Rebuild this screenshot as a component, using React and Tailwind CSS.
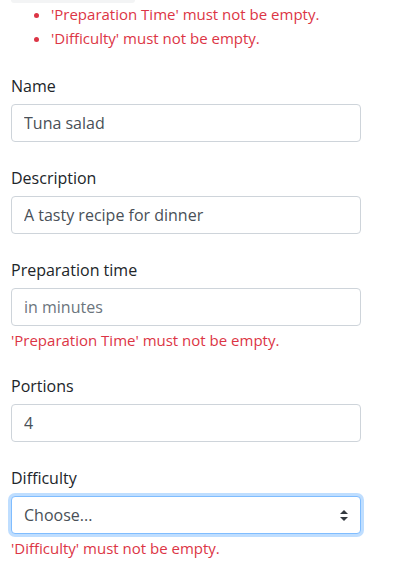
import React from 'react';

function Field({ label, value, placeholder, error }) {
  return (
    <div className="mb-6">
      <label className="block text-[16px] leading-6 text-[#212529] mb-[6px]">{label}</label>
      <input
        readOnly
        defaultValue={value}
        placeholder={placeholder}
        className="block w-[350px] h-[38px] px-3 text-[16px] text-[#495057] placeholder:text-[#6c757d] bg-white border border-[#ced4da] rounded outline-none"
      />
      {error && <div className="mt-1 text-[15px] leading-[20px] text-[#dc3545]">{error}</div>}
    </div>
  );
}

export default function App() {
  return (
    <div className="w-[406px] h-[567px] overflow-hidden bg-white font-['Segoe_UI','Open_Sans',sans-serif]">
      <div className="px-[11px]">
        <div className="w-[124px] h-[3px] bg-[#f3f4f5] rounded-b" />
        <ul className="list-disc pl-10 mt-[-1px] text-[15px] leading-6 text-[#dc3545] marker:text-[#dc3545]">
          <li>'Preparation Time' must not be empty.</li>
          <li>'Difficulty' must not be empty.</li>
        </ul>
        <div className="mt-[24px]">
          <Field label="Name" value="Tuna salad" />
          <Field label="Description" value="A tasty recipe for dinner" />
          <Field label="Preparation time" placeholder="in minutes" error="'Preparation Time' must not be empty." />
          <Field label="Portions" value="4" />
          <div>
            <label className="block text-[16px] leading-6 text-[#212529] mb-[6px]">Difficulty</label>
            <div className="relative w-[350px] h-[38px] flex items-center px-3 text-[16px] text-[#495057] bg-white border border-[#80bdff] rounded shadow-[0_0_0_3px_rgba(0,123,255,0.25)]">
              Choose...
              <svg className="absolute right-[12px] top-[13px]" width="8" height="11" viewBox="0 0 8 11">
                <path d="M4 0 L8 4 H0 Z" fill="#343a40" />
                <path d="M4 11 L8 7 H0 Z" fill="#343a40" />
              </svg>
            </div>
            <div className="mt-1 text-[15px] leading-[20px] text-[#dc3545]">'Difficulty' must not be empty.</div>
          </div>
        </div>
      </div>
    </div>
  );
}
